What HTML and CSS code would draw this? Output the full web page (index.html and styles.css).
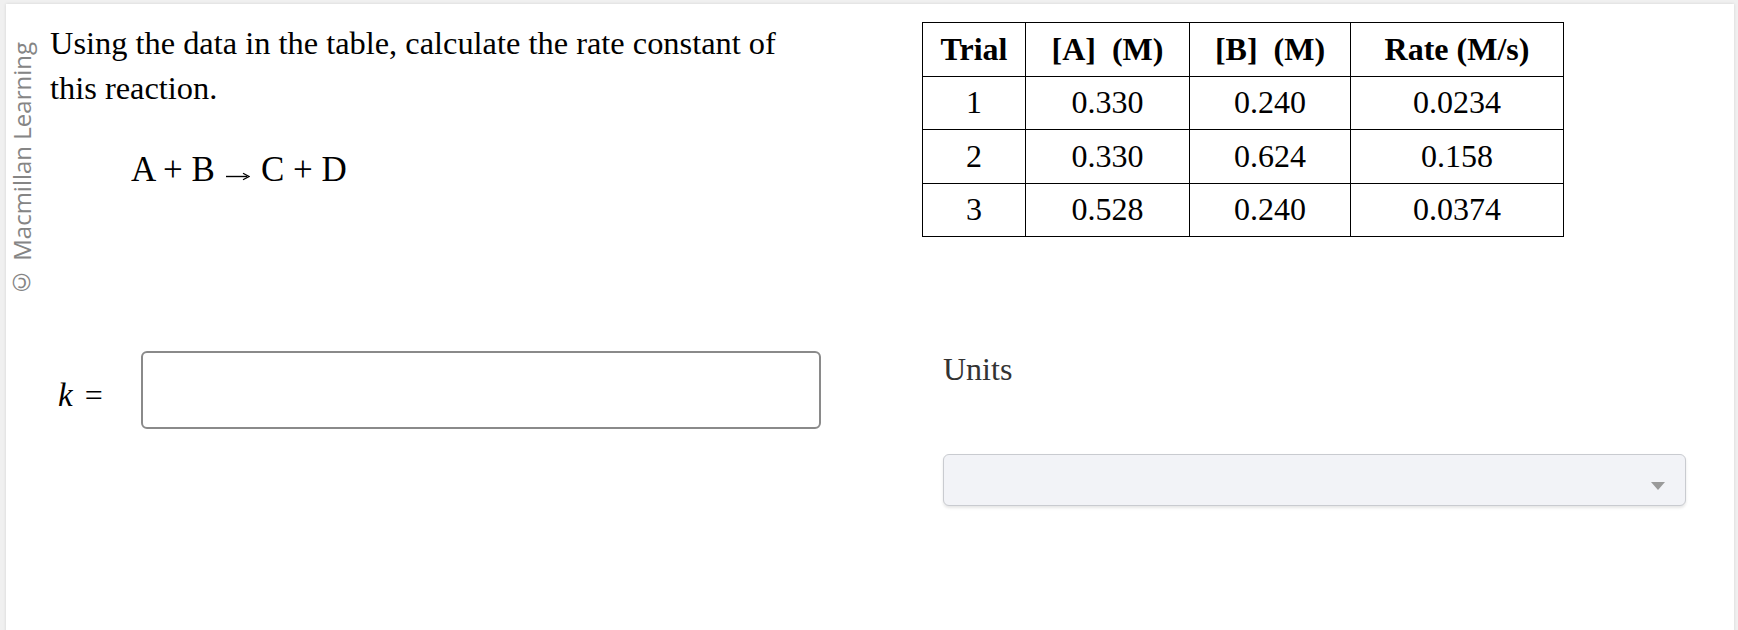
FILE: index.html
```html
<!DOCTYPE html>
<html lang="en">
<head>
<meta charset="utf-8">
<title>Rate constant question</title>
<link rel="stylesheet" href="styles.css">
</head>
<body>
<div class="panel">
  <div class="wm-col"><span class="wm">© Macmillan Learning</span></div>
  <div class="main">
    <div class="top">
      <div class="question">
        <p class="prompt">Using the data in the table, calculate the rate constant of this reaction.</p>
        <div class="equation">
          <span>A + B</span>
          <svg class="arrow" width="24" height="10" viewBox="0 0 24 10"><path d="M0 5.5H21" stroke="#000" stroke-width="1.4"/><path d="M17 2.3L23 5.5L17 8.7" fill="none" stroke="#000" stroke-width="1.3"/></svg>
          <span>C + D</span>
        </div>
      </div>
      <table class="data">
        <thead>
          <tr><th class="c1">Trial</th><th class="c2">[A]&nbsp; (M)</th><th class="c3">[B]&nbsp; (M)</th><th class="c4">Rate (M/s)</th></tr>
        </thead>
        <tbody>
          <tr><td>1</td><td>0.330</td><td>0.240</td><td>0.0234</td></tr>
          <tr><td>2</td><td>0.330</td><td>0.624</td><td>0.158</td></tr>
          <tr><td>3</td><td>0.528</td><td>0.240</td><td>0.0374</td></tr>
        </tbody>
      </table>
    </div>
    <div class="bottom">
      <div class="answer">
        <div class="klabel"><span class="k">k</span><span class="eq">=</span></div>
        <div class="input"></div>
      </div>
      <div class="units">
        <div class="units-label">Units</div>
        <div class="select"><span class="caret"></span></div>
      </div>
    </div>
  </div>
</div>
</body>
</html>
```

FILE: styles.css
```css
html, body {
  margin: 0;
  padding: 0;
}
body {
  background: #f0f0f0;
  font-family: "Liberation Serif", "Times New Roman", serif;
  color: #000;
  overflow: hidden;
}
.panel {
  margin: 4px 4px 0 6px;
  min-height: 700px;
  background: #fff;
  box-shadow: 0 0 3px rgba(0,0,0,0.12);
  display: flex;
  padding-top: 17px;
  box-sizing: border-box;
}
.wm-col {
  width: 32px;
  flex: none;
  display: flex;
  justify-content: center;
  align-items: flex-start;
}
.wm {
  margin-top: 21px;
  writing-mode: vertical-rl;
  transform: rotate(180deg);
  font-family: "Open Sans", "Liberation Sans", sans-serif;
  font-size: 24px;
  line-height: 28px;
  color: #858585;
  white-space: nowrap;
}
.main {
  flex: 1;
  display: flex;
  flex-direction: column;
}
.top {
  display: grid;
  grid-template-columns: 884px auto;
  align-items: start;
  justify-items: start;
}
.question {
  padding-left: 12px;
}
.prompt {
  margin: 0;
  max-width: 750px;
  font-size: 32.4px;
  line-height: 45px;
}
.equation {
  margin: 39px 0 0 81px;
  font-size: 35px;
  line-height: 40px;
  display: flex;
  align-items: baseline;
  gap: 11px;
}
.arrow {
  align-self: center;
  margin-top: 12px;
}
.data {
  margin-top: 1px;
  border-collapse: collapse;
  font-size: 32px;
  text-align: center;
}
.data th, .data td {
  border: 1px solid #000;
  height: 52.5px;
  padding: 0;
}
.data th {
  font-weight: bold;
}
.c1 { width: 102px; }
.c2 { width: 163px; }
.c3 { width: 160px; }
.c4 { width: 212px; }
.bottom {
  display: grid;
  grid-template-columns: 884px auto;
  align-items: start;
  margin-top: 110px;
}
.answer {
  display: flex;
  align-items: center;
  padding-left: 20px;
  margin-top: 4px;
}
.klabel {
  display: flex;
  align-items: baseline;
  margin-top: 11px;
}
.k {
  font-style: italic;
  font-size: 33px;
}
.eq {
  font-size: 32px;
  margin-left: 12px;
}
.input {
  margin-left: 38px;
  width: 680px;
  height: 78px;
  box-sizing: border-box;
  border: 2px solid #8a8a8a;
  border-radius: 6px;
  background: #fff;
}
.units {
  padding-left: 21px;
}
.units-label {
  font-size: 32px;
  line-height: 45px;
  color: #333;
}
.select {
  margin-top: 62px;
  width: 743px;
  height: 52px;
  box-sizing: border-box;
  background: #f2f3f7;
  border: 1px solid #c9cbd0;
  border-radius: 6px;
  box-shadow: 0 2px 3px rgba(0,0,0,0.10);
  display: flex;
  justify-content: flex-end;
  align-items: center;
  padding: 12px 20px 0 0;
}
.caret {
  width: 0;
  height: 0;
  border-left: 7px solid transparent;
  border-right: 7px solid transparent;
  border-top: 8px solid #9a9a9a;
}
```
